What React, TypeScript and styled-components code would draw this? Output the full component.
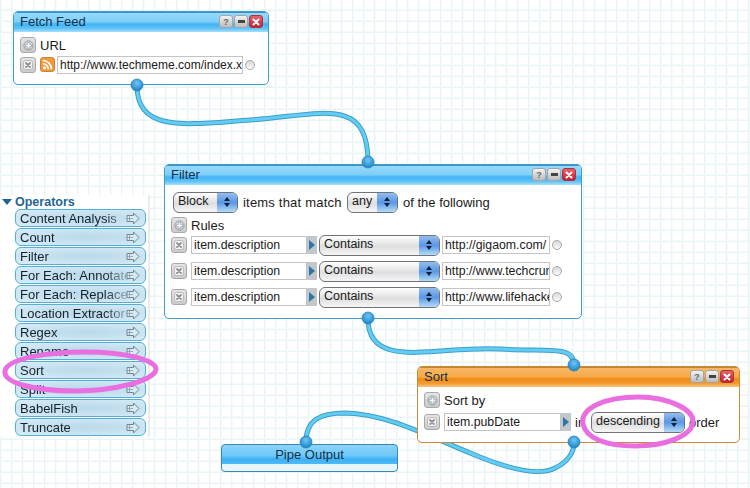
import React from 'react';
import styled, { createGlobalStyle, css } from 'styled-components';

const GlobalStyle = createGlobalStyle`
  html, body {
    margin: 0;
    padding: 0;
    background: #fff;
  }
  body {
    font-family: "Liberation Sans", Arial, sans-serif;
    color: #1a1a1a;
  }
`;

const Canvas = styled.div`
  position: relative;
  width: 750px;
  height: 488px;
  overflow: hidden;
  padding-top: 195px;
  box-sizing: border-box;
  background-color: #fff;
  background-image:
    linear-gradient(90deg, #e9f4f7 1px, #f5fafb 1px, #f5fafb 2px, transparent 2px),
    linear-gradient(0deg, #e9f4f7 1px, #f5fafb 1px, #f5fafb 2px, transparent 2px);
  background-size: 11px 11px;
`;

const Sidebar = styled.div`
  width: 148px;
  height: 242px;
  background: #fff;
  overflow: hidden;
  border-right: 2px solid #e8ecee;
`;

const SidebarTitle = styled.div`
  display: flex;
  align-items: center;
  gap: 3px;
  height: 14px;
  padding-left: 2px;
  font-size: 12.5px;
  font-weight: bold;
  color: #1f6594;
`;

const Triangle = styled.span`
  width: 0;
  height: 0;
  border-left: 5px solid transparent;
  border-right: 5px solid transparent;
  border-top: 6px solid #1f6594;
`;

const OperatorList = styled.div`
  display: flex;
  flex-direction: column;
  gap: 1px;
  padding-left: 15px;
`;

const Operator = styled.div`
  position: relative;
  display: flex;
  align-items: center;
  width: 131px;
  height: 18px;
  box-sizing: border-box;
  padding: 0 5px 0 4px;
  border: 1px solid #55aed4;
  border-radius: 6px;
  background: radial-gradient(ellipse at 55% 50%, #b9d9ea 0%, #c9e3f1 55%, #d9eef8 100%);
  overflow: hidden;
`;

const OperatorName = styled.span`
  display: block;
  width: 109px;
  font-size: 13px;
  white-space: nowrap;
  overflow: hidden;
  color: #16222a;
  mask-image: linear-gradient(90deg, #000 78%, rgba(0, 0, 0, 0.15) 100%);
`;

const OperatorIcon = styled.svg`
  position: absolute;
  right: 5px;
  top: 2px;
`;

const Node = styled.div<{ $x: number; $y: number; $w: number; $h: number; $orange?: boolean }>`
  position: absolute;
  left: ${p => p.$x}px;
  top: ${p => p.$y}px;
  width: ${p => p.$w}px;
  height: ${p => p.$h}px;
  box-sizing: border-box;
  display: flex;
  flex-direction: column;
  background: #fff;
  border: 1px solid ${p => (p.$orange ? '#c98a3a' : '#3f9dcb')};
  border-radius: 5px;
  overflow: hidden;
`;

const blueBar = css`
  border-top: 1px solid #3a93c8;
  background: linear-gradient(180deg, #97d9fb 0%, #7fcff9 45%, #42b4f5 58%, #5cc1f7 80%, #a6e0fb 100%);
`;

const orangeBar = css`
  border-top: 1px solid #c9802a;
  background: linear-gradient(180deg, #f8b766 0%, #f7aa4c 45%, #f08a10 58%, #f39a2c 80%, #f9c37e 100%);
`;

const TitleBar = styled.div<{ $orange?: boolean }>`
  ${p => (p.$orange ? orangeBar : blueBar)}
  display: flex;
  align-items: center;
  justify-content: space-between;
  box-sizing: border-box;
  height: 20px;
  flex: none;
  padding: 0 5px 2px 6px;
  font-size: 13px;
  color: #12324a;
`;

const WindowButtons = styled.div`
  display: flex;
  gap: 1px;
`;

const WindowButton = styled.span<{ $red?: boolean }>`
  display: flex;
  align-items: center;
  justify-content: center;
  width: 14px;
  height: 13px;
  border-radius: 3px;
  background: ${p => (p.$red ? 'linear-gradient(180deg, #e8636b, #c41f30)' : 'linear-gradient(180deg, #f2f2f2, #bcbcbc)')};
  border: 1px solid ${p => (p.$red ? '#a8343c' : '#a5a5a5')};
  box-sizing: border-box;
`;

const HelpMark = styled.span`
  font-size: 9px;
  font-weight: bold;
  color: #666;
`;

const MinusMark = styled.span`
  width: 7px;
  height: 3px;
  background: #444;
`;

const Body = styled.div`
  display: flex;
  flex-direction: column;
  padding: 4px 6px 0;
  font-size: 13px;
`;

const Row = styled.div<{ $h?: number; $gap?: number }>`
  display: flex;
  align-items: center;
  height: ${p => p.$h ?? 18}px;
  gap: ${p => p.$gap ?? 2}px;
  white-space: nowrap;
`;

const HeaderRow = styled(Row)`
  margin-top: 2px;
  padding-left: 2px;
`;

const RulesRow = styled(Row)`
  margin-top: 3px;
`;

const RuleList = styled.div`
  display: flex;
  flex-direction: column;
  gap: 4px;
`;

const SquareButton = styled.span`
  display: flex;
  align-items: center;
  justify-content: center;
  flex: none;
  width: 16px;
  height: 16px;
  margin-right: 2px;
  box-sizing: border-box;
  border: 1px solid #a9a9a9;
  border-radius: 3px;
  background: linear-gradient(180deg, #e4e4e4, #cbcbcb);
`;

const TextField = styled.div<{ $w: number; $size?: number }>`
  width: ${p => p.$w}px;
  height: 18px;
  flex: none;
  box-sizing: border-box;
  padding: 0 2px;
  line-height: 16px;
  border: 1px solid #c4c4c4;
  background: #fff;
  overflow: hidden;
  white-space: nowrap;
  font-size: ${p => p.$size ?? 12.3}px;
`;

const ComboField = styled.div`
  display: flex;
  flex: none;
`;

const ComboArrow = styled.span`
  display: flex;
  align-items: center;
  justify-content: center;
  width: 10px;
  height: 18px;
  flex: none;
  background: #c2c7cb;
  &::before {
    content: '';
    border-left: 6px solid #2f76a6;
    border-top: 5px solid transparent;
    border-bottom: 5px solid transparent;
  }
`;

const Radio = styled.span`
  display: inline-block;
  flex: none;
  width: 10px;
  height: 10px;
  box-sizing: border-box;
  border-radius: 50%;
  border: 1px solid #a8a8a8;
  background: linear-gradient(180deg, #d8d8d8, #fafafa);
`;

const Select = styled.div<{ $w: number }>`
  position: relative;
  display: flex;
  align-items: center;
  width: ${p => p.$w}px;
  height: 21px;
  flex: none;
  box-sizing: border-box;
  padding: 0 0 2px 4px;
  border: 1px solid #6f7276;
  border-radius: 6px;
  background: linear-gradient(180deg, #fff, #dedede 55%, #f6f6f6);
  font-size: 12.5px;
  overflow: hidden;
`;

const SelectArrows = styled.span`
  position: absolute;
  right: 0;
  top: 0;
  bottom: 0;
  width: 20px;
  display: flex;
  flex-direction: column;
  align-items: center;
  justify-content: center;
  gap: 2px;
  background: linear-gradient(180deg, #93bcec, #5a97e4 50%, #b5dbf8);
  &::before {
    content: '';
    border-left: 3px solid transparent;
    border-right: 3px solid transparent;
    border-bottom: 4px solid #0d1f3a;
  }
  &::after {
    content: '';
    border-left: 3px solid transparent;
    border-right: 3px solid transparent;
    border-top: 4px solid #0d1f3a;
  }
`;

const MatchLabel = styled.span`
  width: 99px;
  letter-spacing: 0.2px;
`;

const Word = styled.span<{ $w?: number }>`
  margin: 0 2px;
  ${p => (p.$w ? `width: ${p.$w}px;` : '')}
`;

const PipeOutput = styled.div`
  position: absolute;
  left: 221px;
  top: 444px;
  width: 177px;
  height: 28px;
  box-sizing: border-box;
  border: 1px solid #3c86b4;
  border-radius: 4px;
  background: linear-gradient(180deg, #8bd4fb 0, #6fc8f8 40%, #3cb1f4 55%, #4fbaf5 72%, #e4f6fc 73%, #e9f7fc 100%);
  overflow: hidden;
  font-size: 13px;
  text-align: center;
  line-height: 19px;
  color: #12324a;
`;

const Overlay = styled.svg`
  position: absolute;
  left: 0;
  top: 0;
  pointer-events: none;
`;

const PlusIcon = () => (
  <svg width="11" height="11" viewBox="0 0 11 11">
    <circle cx="5.5" cy="5.5" r="4.6" fill="none" stroke="#8f9ca6" />
    <path d="M4.4 2.5h2.2v1.9h1.9v2.2H6.6v1.9H4.4V6.6H2.5V4.4h1.9z" fill="#f4f6f8" stroke="#8f9ca6" strokeWidth="0.6" />
  </svg>
);

const CrossIcon = () => (
  <svg width="10" height="10" viewBox="0 0 10 10">
    <rect x="0.5" y="0.5" width="9" height="9" rx="2" fill="#f4f4f4" stroke="#b8b8b8" />
    <path d="M3 3l4 4M7 3l-4 4" stroke="#8f8f8f" strokeWidth="1.8" strokeLinecap="round" />
  </svg>
);

const RssIcon = () => (
  <svg width="15" height="15" viewBox="0 0 16 16" style={{ flex: 'none' }}>
    <rect x="0.5" y="0.5" width="15" height="15" rx="3" fill="#ef9a3d" stroke="#c9762a" />
    <circle cx="4.6" cy="11.4" r="1.6" fill="#fff" />
    <path d="M3 7.2a5.8 5.8 0 0 1 5.8 5.8M3 3.8A9.2 9.2 0 0 1 12.2 13" fill="none" stroke="#fff" strokeWidth="1.7" />
  </svg>
);

const ArrowIcon = () => (
  <OperatorIcon width="14" height="13" viewBox="0 0 14 13">
    <path d="M1 3.5h6.5V1l5.5 5.5L7.5 12V9.5H1z" fill="#d6eaf5" stroke="#74858f" strokeWidth="1" />
    <path d="M3.5 3.5v6M1 6.5h6" stroke="#8c9ca6" strokeWidth="0.8" fill="none" />
  </OperatorIcon>
);

const CloseIcon = () => (
  <svg width="8" height="8" viewBox="0 0 8 8">
    <path d="M1.5 1.5l5 5M6.5 1.5l-5 5" stroke="#fff" strokeWidth="2" strokeLinecap="round" />
  </svg>
);

const Buttons = () => (
  <WindowButtons>
    <WindowButton><HelpMark>?</HelpMark></WindowButton>
    <WindowButton><MinusMark /></WindowButton>
    <WindowButton $red><CloseIcon /></WindowButton>
  </WindowButtons>
);

const operators = [
  'Content Analysis', 'Count', 'Filter', 'For Each: Annotate', 'For Each: Replace',
  'Location Extractor', 'Regex', 'Rename', 'Sort', 'Split', 'BabelFish', 'Truncate',
];

const rules = ['http://gigaom.com/', 'http://www.techcrunch.com', 'http://www.lifehacker.com'];

const wires = [
  'M137 86C137 134 190 124 250 120C320 115 368 95 368 162',
  'M368 319C368 372 440 345 500 349C550 352 574 345 574 365',
  'M306 442C306 420 320 413 345 413C385 414 420 432 470 453C510 470 540 476 555 468C568 462 574 452 574 443',
];

const ports = [
  [137, 85], [368, 162], [368, 318], [574, 365], [574, 442], [306, 442],
];

export default function App() {
  return (
    <Canvas>
      <GlobalStyle />
      <Sidebar>
        <SidebarTitle><Triangle />Operators</SidebarTitle>
        <OperatorList>
          {operators.map(name => (
            <Operator key={name}><OperatorName>{name}</OperatorName><ArrowIcon /></Operator>
          ))}
        </OperatorList>
      </Sidebar>

      <Overlay width="750" height="488" viewBox="0 0 750 488">
        {wires.map(d => (
          <g key={d} fill="none">
            <path d={d} stroke="#3d9fc9" strokeWidth="5" />
            <path d={d} stroke="#62ccf2" strokeWidth="3" />
          </g>
        ))}
      </Overlay>

      <Node $x={13} $y={11} $w={256} $h={74}>
        <TitleBar>Fetch Feed<Buttons /></TitleBar>
        <Body>
          <Row><SquareButton><PlusIcon /></SquareButton>URL</Row>
          <Row $h={21}>
            <SquareButton><CrossIcon /></SquareButton>
            <RssIcon />
            <TextField $w={186} $size={12}>http://www.techmeme.com/index.xml</TextField>
            <Radio />
          </Row>
        </Body>
      </Node>

      <Node $x={164} $y={164} $w={418} $h={155}>
        <TitleBar>Filter<Buttons /></TitleBar>
        <Body>
          <HeaderRow $h={22} $gap={5}>
            <Select $w={65}>Block<SelectArrows /></Select>
            <MatchLabel>items that match</MatchLabel>
            <Select $w={51}>any<SelectArrows /></Select>
            of the following
          </HeaderRow>
          <RulesRow><SquareButton><PlusIcon /></SquareButton>Rules</RulesRow>
          <RuleList>
            {rules.map(url => (
              <Row key={url} $h={22}>
                <SquareButton><CrossIcon /></SquareButton>
                <ComboField>
                  <TextField $w={116}>item.description</TextField>
                  <ComboArrow />
                </ComboField>
                <Select $w={121}>Contains<SelectArrows /></Select>
                <TextField $w={108}>{url}</TextField>
                <Radio />
              </Row>
            ))}
          </RuleList>
        </Body>
      </Node>

      <Node $x={417} $y={366} $w={323} $h={77} $orange>
        <TitleBar $orange>Sort<Buttons /></TitleBar>
        <Body>
          <Row><SquareButton><PlusIcon /></SquareButton>Sort by</Row>
          <Row $h={26}>
            <SquareButton><CrossIcon /></SquareButton>
            <ComboField>
              <TextField $w={117}>item.pubDate</TextField>
              <ComboArrow />
            </ComboField>
            <Word $w={12}>in</Word>
            <Select $w={94}>descending<SelectArrows /></Select>
            <Word>order</Word>
          </Row>
        </Body>
      </Node>

      <PipeOutput>Pipe Output</PipeOutput>

      <Overlay width="750" height="488" viewBox="0 0 750 488">
        <defs>
          <radialGradient id="port" cx="50%" cy="35%" r="65%">
            <stop offset="0" stopColor="#6cc8f8" />
            <stop offset="1" stopColor="#1a82c4" />
          </radialGradient>
        </defs>
        {ports.map(([x, y]) => (
          <circle key={`${x}-${y}`} cx={x} cy={y} r="6" fill="url(#port)" stroke="#2a83b8" strokeWidth="0.8" />
        ))}
        <g fill="none" stroke="#e96ee0" strokeWidth="5">
          <path d="M5 371C7 358 50 352 85 352C125 352 156 360 156 369C156 380 115 391 75 391C35 391 3 383 5 371Z" />
          <path d="M583 424C580 408 605 397 638 397C670 397 693 410 693 421C693 436 665 446 635 446C605 446 586 438 583 424Z" />
        </g>
      </Overlay>
    </Canvas>
  );
}
